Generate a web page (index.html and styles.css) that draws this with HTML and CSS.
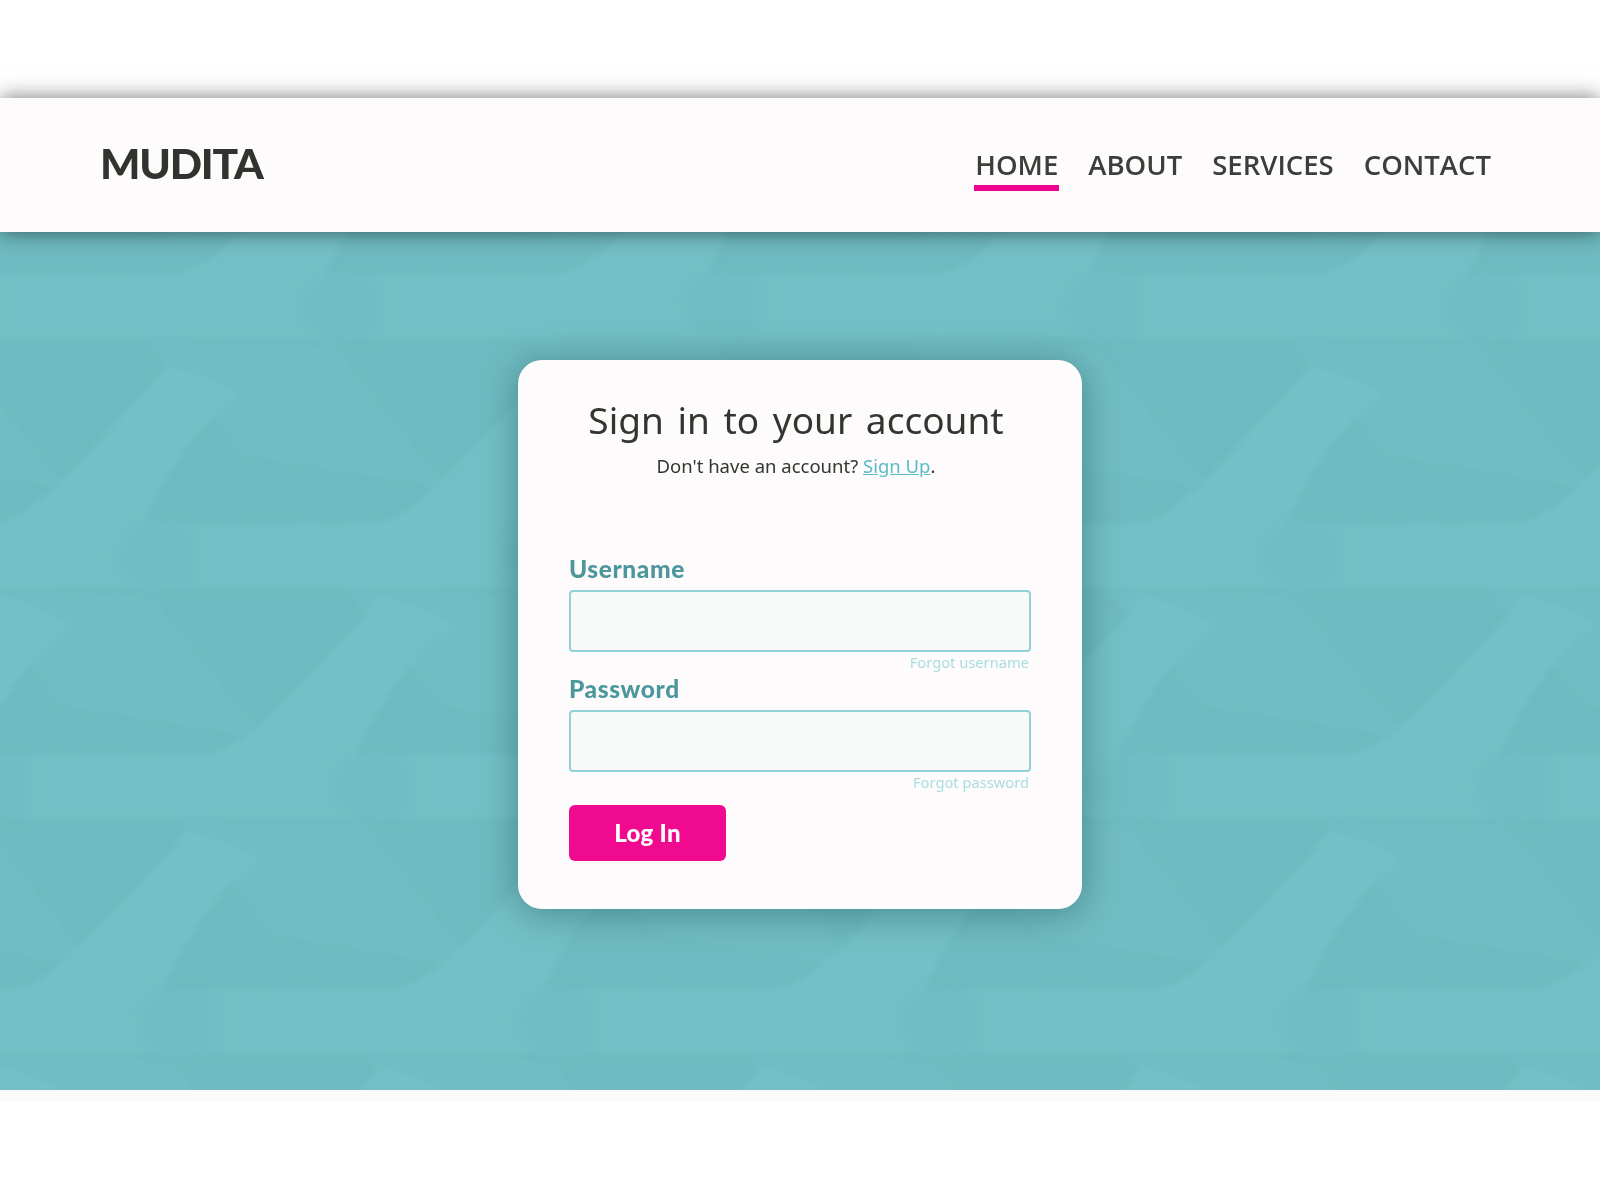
FILE: index.html
```html
<!DOCTYPE html>
<html lang="en">
<head>
<meta charset="utf-8">
<title>Mudita</title>
<link rel="stylesheet" href="styles.css">
</head>
<body>
<div class="page">
  <header class="topbar">
    <a class="logo" href="#">MUDITA</a>
    <nav class="nav">
      <a class="nav-link active" href="#">HOME</a>
      <a class="nav-link" href="#">ABOUT</a>
      <a class="nav-link" href="#">SERVICES</a>
      <a class="nav-link" href="#">CONTACT</a>
    </nav>
  </header>
  <main class="hero">
    <svg class="weave" viewBox="0 0 1600 858" aria-hidden="true">
      <defs>
        <g id="strand">
          <path class="strand-mid" d="M18 40 L130 182 L-70 150 L-170 34Z"/>
          <path class="strand-band" d="M8 -30 C100 -33 190 -32 244 -33 C280 -40 310 -75 394 -165 L414 -190 C440 -185 470 -172 487 -161 C450 -135 415 -90 381 -11 C370 10 375 32 395 32 L8 32 C-12 20 -12 -15 8 -30Z"/>
          <path class="strand-end" d="M-14 1 C-12 -16 0 -28 14 -30 L60 -28 L60 30 L14 32 C0 28 -12 16 -14 1Z"/>
        </g>
        <g id="row">
          <use href="#strand" x="-762"/>
          <use href="#strand" x="-381"/>
          <use href="#strand" x="0"/>
          <use href="#strand" x="381"/>
          <use href="#strand" x="762"/>
          <use href="#strand" x="1143"/>
          <use href="#strand" x="1524"/>
        </g>
      </defs>
      <g class="weave-group">
        <use href="#row" x="133" y="-165"/>
        <use href="#row" x="316" y="74"/>
        <use href="#row" x="133" y="324"/>
        <use href="#row" x="347" y="554"/>
        <use href="#row" x="153" y="789"/>
        <use href="#row" x="347" y="1025"/>
      </g>
    </svg>
    <section class="card">
      <div class="card-head">
        <h1 class="title">Sign in to your account</h1>
        <p class="subtitle">Don't have an account? <a class="signup" href="#">Sign Up</a>.</p>
      </div>
      <form class="form">
        <div class="field">
          <label class="label" for="username">Username</label>
          <input class="input" id="username" type="text">
          <a class="forgot" href="#">Forgot username</a>
        </div>
        <div class="field">
          <label class="label" for="password">Password</label>
          <input class="input" id="password" type="password">
          <a class="forgot" href="#">Forgot password</a>
        </div>
        <button class="submit" type="button">Log In</button>
      </form>
    </section>
  </main>
  <div class="reflection"></div>
</div>
</body>
</html>
```

FILE: styles.css
```css
* { box-sizing: border-box; }
html, body { margin: 0; padding: 0; background: #fff; }
.page {
  width: 1600px;
  height: 1200px;
  padding-top: 98px;
  overflow: hidden;
  display: flex;
  flex-direction: column;
}
.topbar {
  position: relative;
  z-index: 2;
  flex: 0 0 134px;
  display: flex;
  align-items: center;
  justify-content: space-between;
  padding: 0 108px 0 100px;
  background: #fefbfc;
  box-shadow: 0 0 20px rgba(0, 0, 0, 0.55);
}
.logo {
  margin-top: -4px;
  font: 900 42.5px/1 "Lato", sans-serif;
  letter-spacing: -1.2px;
  color: #32332e;
  text-decoration: none;
}
.nav { display: flex; gap: 28px; padding-top: 6px; }
.nav-link {
  padding: 0 1px 1px;
  border-bottom: 6px solid transparent;
  font: 600 27.5px/38px "Open Sans", sans-serif;
  color: #3d3e3a;
  text-decoration: none;
}
.nav-link.active { border-bottom-color: #ee0390; }
.hero {
  position: relative;
  flex: 0 0 858px;
  display: flex;
  justify-content: center;
  align-items: flex-start;
  padding-top: 128px;
  background: #6ebbc1;
}
.weave { position: absolute; inset: 0; width: 100%; height: 100%; }
.weave-group { filter: blur(2.5px); }
.strand-mid { fill: #70bdc3; }
.strand-band { fill: #73c0c6; }
.strand-end { fill: #6fbcc2; filter: blur(6px); }
.card {
  position: relative;
  width: 564px;
  height: 549px;
  padding: 37px 51px 0;
  border-radius: 24px;
  background: #fefbfc;
  box-shadow: 0 4px 36px rgba(40, 90, 95, 0.55);
  font-family: "Noto Sans", sans-serif;
}
.card-head { text-align: center; padding-right: 8px; }
.title {
  margin: 0;
  font: 400 37px/46px "Noto Sans", sans-serif;
  word-spacing: 4px;
  color: #33352f;
}
.subtitle {
  margin: 10px 0 0;
  font: 400 18.5px/26px "Noto Sans", sans-serif;
  color: #33352f;
}
.signup { color: #5cbcc5; }
.form { margin-top: 73px; display: flex; flex-direction: column; align-items: flex-start; }
.field { width: 100%; display: flex; flex-direction: column; height: 120px; }
.label {
  padding-top: 1px;
  height: 32px;
  font: 900 24.5px/32px "Lato", sans-serif;
  letter-spacing: 0.6px;
  color: #4c979c;
}
.input {
  width: 100%;
  height: 62px;
  margin-top: 6px;
  border: 2px solid #93d1d6;
  border-radius: 4px;
  background: #f8f9f9;
}
.forgot {
  align-self: flex-end;
  margin-right: 2px;
  font: 400 14.7px/20px "Noto Sans", sans-serif;
  color: #a9dde0;
  text-decoration: none;
}
.submit {
  margin-top: 13px;
  width: 157px;
  height: 56px;
  border: 0;
  border-radius: 6px;
  background: #ef0a8f;
  color: #fff;
  font: 900 24px/1 "Lato", sans-serif;
  letter-spacing: 0.3px;
}
.reflection { flex: 0 0 12px; background: #fafafa; }
```
